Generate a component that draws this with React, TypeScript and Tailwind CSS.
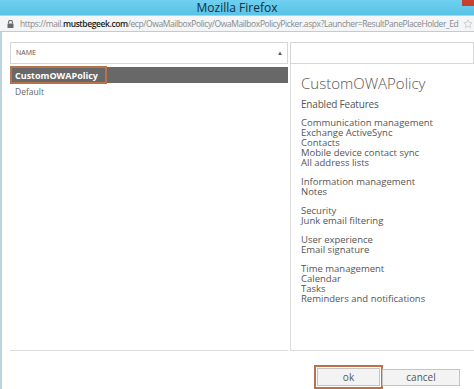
import React from "react";

const groups: { title: string; items: string[] }[] = [
  {
    title: "Communication management",
    items: ["Exchange ActiveSync", "Contacts", "Mobile device contact sync", "All address lists"],
  },
  { title: "Information management", items: ["Notes"] },
  { title: "Security", items: ["Junk email filtering"] },
  { title: "User experience", items: ["Email signature"] },
  { title: "Time management", items: ["Calendar", "Tasks", "Reminders and notifications"] },
];

function LockIcon() {
  return (
    <svg width="7" height="8" viewBox="0 0 7 8" className="shrink-0">
      <path d="M1.5 3.5V2.4a2 2 0 0 1 4 0v1.1" fill="none" stroke="#6b6b6b" strokeWidth="1.1" />
      <rect x="0.5" y="3.5" width="6" height="4.5" rx="0.5" fill="#6b6b6b" />
    </svg>
  );
}

function StarIcon() {
  return (
    <svg width="10" height="10" viewBox="0 0 10 10" className="shrink-0">
      <path
        d="M5 0.8l1.2 2.7 2.9.3-2.2 1.9.7 2.9L5 7.1 2.4 8.6l.7-2.9L.9 3.8l2.9-.3z"
        fill="none"
        stroke="#c9c9c9"
        strokeWidth="0.8"
      />
    </svg>
  );
}

export default function App() {
  return (
    <div
      className="relative h-[389px] w-[474px] overflow-hidden bg-white text-[#444]"
      style={{ fontFamily: '"Open Sans", "Noto Sans", sans-serif' }}
    >
      {/* title bar */}
      <div className="relative flex h-[15px] items-center justify-center bg-gradient-to-b from-[#6fd0ef] to-[#58c3e6]">
        <span className="text-[12px] leading-none text-[#10303f]">Mozilla Firefox</span>
        <div className="absolute right-0 top-0 h-[6px] w-[12px] bg-[#c8402f]" />
      </div>

      {/* address bar */}
      <div className="flex h-[17px] items-center border-y border-[#b9cfd6] bg-[#f3f5f6] pl-[7px] pr-[1px]">
        <LockIcon />
        <span className="ml-[6px] flex-1 overflow-hidden whitespace-nowrap text-[8.5px] leading-[12px] tracking-[-0.4px] text-[#8a8a8a]">
          https://mail.<span className="font-semibold text-[#222]">mustbegeek.com</span>
          /ecp/OwaMailboxPolicy/OwaMailboxPolicyPicker.aspx?Launcher=ResultPanePlaceHolder_Ed
        </span>
        <StarIcon />
      </div>

      {/* body */}
      <div className="flex h-[357px]">
        <div className="w-[2px] bg-[#bcd5dc]" />
        <div className="flex flex-1 flex-col pl-[8px] pt-[10px]">
          <div className="flex h-[309px]">
            {/* left list */}
            <div className="flex w-[278px] flex-col border-b border-[#dcdcdc]">
              <div className="flex h-[22px] items-center justify-between border border-[#d6d6d6] pl-[5px] pr-[4px]">
                <span className="text-[7px] text-[#555]">NAME</span>
                <span className="text-[6px] text-[#555]">▲</span>
              </div>
              <div className="relative mt-[3px] flex h-[16px] items-center bg-[#686868] pl-[5px]">
                <span className="text-[9px] font-bold leading-none text-white">CustomOWAPolicy</span>
                <div className="absolute left-0 top-[-1px] h-[18px] w-[97px] border-2 border-[#b8714a]" />
              </div>
              <div className="pl-[5px] pt-[2px] text-[8.5px] leading-[14px] text-[#666]">Default</div>
            </div>

            {/* right details */}
            <div className="ml-[2px] flex flex-1 flex-col">
              <div className="h-[22px] border border-[#d6d6d6]" />
              <div className="flex-1 border-b border-l border-[#dcdcdc] pl-[10px] pt-[9px]">
                <div className="text-[15px] font-light leading-[20px] text-[#555]">CustomOWAPolicy</div>
                <div className="mt-[4px] text-[10px] leading-[14px] tracking-[-0.2px] text-[#555]">
                  Enabled Features
                </div>
                <div className="mt-[7px] flex flex-col gap-[9px]">
                  {groups.map((g) => (
                    <div key={g.title} className="text-[9.5px] leading-[10px] text-[#555]">
                      <div>{g.title}</div>
                      {g.items.map((it) => (
                        <div key={it}>{it}</div>
                      ))}
                    </div>
                  ))}
                </div>
              </div>
            </div>
          </div>

          {/* buttons */}
          <div className="flex justify-end pr-[14px] pt-[14px]">
            <div className="border-2 border-[#b8714a] p-[1px]">
              <button className="flex h-[18px] w-[63px] items-center justify-center border border-[#c4c4c4] bg-[#f3f3f3] text-[10px] text-[#555]">
                ok
              </button>
            </div>
            <button className="ml-[-1px] mt-[4px] flex h-[17px] w-[78px] items-center justify-center border border-[#c4c4c4] bg-[#f3f3f3] text-[10px] text-[#555]">
              cancel
            </button>
          </div>
        </div>
      </div>
    </div>
  );
}
